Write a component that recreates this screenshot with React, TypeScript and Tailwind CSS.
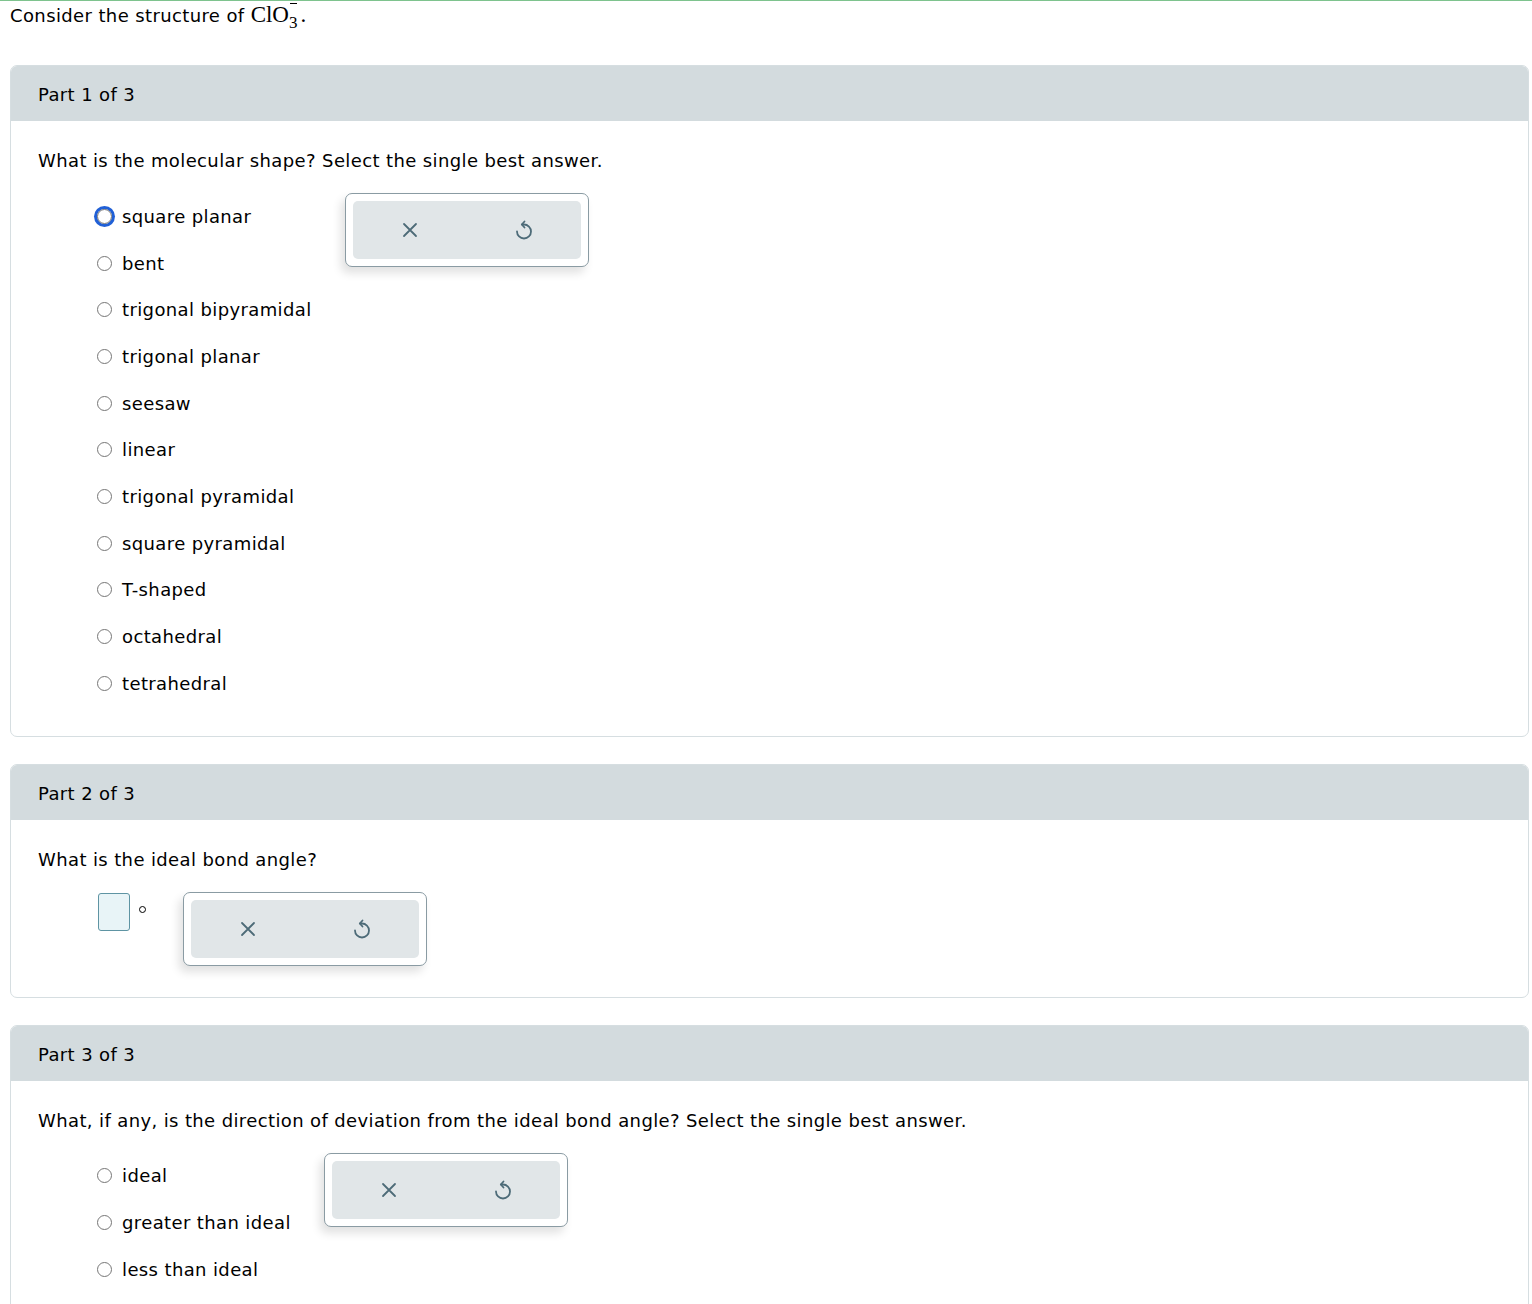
import React from "react";

const font = { fontFamily: '"DejaVu Sans", Verdana, sans-serif', letterSpacing: "0.38px" };

const XIcon = () => (
  <svg width="18" height="18" viewBox="0 0 18 18" fill="none" stroke="#4d6b78" strokeWidth="1.8" strokeLinecap="round">
    <path d="M3 3L15 15M15 3L3 15" />
  </svg>
);

const UndoIcon = () => (
  <svg width="20" height="20" viewBox="0 0 20 20" fill="none" stroke="#4d6b78" strokeWidth="1.8" strokeLinecap="round" strokeLinejoin="round">
    <path d="M8 4.5h2a7 7 0 1 1 -7 7" />
    <path d="M10.5 1.5L7.8 4.5L10.5 7.5" />
  </svg>
);

const ActionBox = () => (
  <div className="w-[244px] h-[74px] shrink-0 rounded-[7px] border border-[#8a9ba3] bg-white p-[7px] shadow-[-4px_6px_10px_rgba(0,0,0,0.12)]">
    <div className="flex h-full rounded-[5px] bg-[#e1e6e8]">
      <button className="flex flex-1 items-center justify-center">
        <XIcon />
      </button>
      <button className="flex flex-1 items-center justify-center">
        <UndoIcon />
      </button>
    </div>
  </div>
);

const Radio = ({ label, focused }: { label: string; focused?: boolean }) => (
  <div className="flex h-[46.7px] items-center">
    <span
      className={
        focused
          ? "h-[15px] w-[15px] rounded-full border border-[#767676] ring-[3px] ring-[#2160d6]"
          : "h-[15px] w-[15px] rounded-full border border-[#767676]"
      }
    />
    <span className="ml-[10px] text-[18px] text-black">{label}</span>
  </div>
);

const Card = ({ part, children, bottom }: { part: number; children: React.ReactNode; bottom: string }) => (
  <div className={`rounded-[7px] border border-[#d6dee1] bg-white overflow-hidden ${bottom}`}>
    <div className="flex h-[55px] items-center bg-[#d3dbde] px-[27px] pt-[2px] text-[18px] text-black">Part {part} of 3</div>
    <div className="px-[27px] pt-[28px]">{children}</div>
  </div>
);

const shapes = [
  "square planar",
  "bent",
  "trigonal bipyramidal",
  "trigonal planar",
  "seesaw",
  "linear",
  "trigonal pyramidal",
  "square pyramidal",
  "T-shaped",
  "octahedral",
  "tetrahedral",
];

const App: React.FC = () => {
  return (
    <div className="min-h-screen bg-white" style={font}>
      <div className="h-[1px] bg-[#7ec38e]" />
      <div className="pl-[10px] pr-[3px]">
        <div className="flex h-[31px] items-baseline pt-[2px] text-[18px] leading-[24px] text-black">
          <span>Consider the structure of&nbsp;</span>
          <span className="text-[23px] leading-[24px] tracking-normal" style={{ fontFamily: '"Liberation Serif", "Times New Roman", serif' }}>
            ClO
            <span className="relative inline-block text-[17px] top-[6px] leading-none">
              <span className="absolute left-[1px] right-[0px] -top-[11px] h-[1px] bg-black" />
              3
            </span>
            <span className="ml-[3px]">.</span>
          </span>
        </div>

        <div className="mt-[33px] flex flex-col gap-[27px]">
          <Card part={1} bottom="pb-[29px]">
            <div className="h-[24px] leading-[24px] text-[18px] text-black">What is the molecular shape? Select the single best answer.</div>
            <div className="mt-[20px] flex items-start pl-[59px]">
              <div className="flex flex-col">
                {shapes.map((s, i) => (
                  <Radio key={s} label={s} focused={i === 0} />
                ))}
              </div>
              <div className="ml-[33px]">
                <ActionBox />
              </div>
            </div>
          </Card>

          <Card part={2} bottom="pb-[31px]">
            <div className="h-[24px] leading-[24px] text-[18px] text-black">What is the ideal bond angle?</div>
            <div className="mt-[20px] flex items-start pl-[60px]">
              <div className="mt-[1px] h-[38px] w-[32px] rounded-[3px] border border-[#5e94a3] bg-[#e8f4f7]" />
              <span className="ml-[9px] mt-[14px] h-[7px] w-[7px] rounded-full border-[1.5px] border-black" />
              <div className="ml-[37px]">
                <ActionBox />
              </div>
            </div>
          </Card>

          <Card part={3} bottom="pb-[20px]">
            <div className="h-[24px] leading-[24px] text-[18px] text-black">What, if any, is the direction of deviation from the ideal bond angle? Select the single best answer.</div>
            <div className="mt-[20px] flex items-start pl-[59px]">
              <div className="flex flex-col">
                {["ideal", "greater than ideal", "less than ideal"].map((s) => (
                  <Radio key={s} label={s} />
                ))}
              </div>
              <div className="ml-[33px]">
                <ActionBox />
              </div>
            </div>
          </Card>
        </div>
      </div>
    </div>
  );
};

export default App;
